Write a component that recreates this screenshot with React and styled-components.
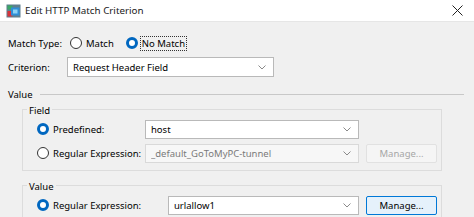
import React from "react";
import styled, { createGlobalStyle } from "styled-components";

const Global = createGlobalStyle`
  html, body {
    margin: 0;
    padding: 0;
    background: #f0f0f0;
  }
  body {
    font-family: "Noto Sans", "Open Sans", sans-serif;
    font-size: 9.5px;
    color: #000;
  }
`;

const Window = styled.div`
  width: 474px;
  height: 217px;
  overflow: hidden;
  background: #f0f0f0;
`;

const TitleBar = styled.div`
  height: 22px;
  background: #fff;
  display: flex;
  align-items: center;
  padding: 0 11px 0 6px;
  border-bottom: 1px solid #e6e6e6;
  box-sizing: border-box;
`;

const Title = styled.span`
  flex: 1;
  margin-left: 4px;
  font-size: 9.8px;
  color: #1a1a1a;
`;

const Body = styled.div`
  padding: 11px 10px 0 8px;
  display: flex;
  flex-direction: column;
  align-items: flex-start;
`;

const Row = styled.div`
  display: flex;
  align-items: center;
  height: 20px;
  flex-shrink: 0;
  margin-bottom: ${(p) => p.$mb || 0}px;
`;

const Label = styled.span`
  width: ${(p) => (p.$w ? p.$w + "px" : "auto")};
  margin-right: ${(p) => p.$mr || 0}px;
  flex-shrink: 0;
  white-space: nowrap;
`;

const RadioWrap = styled.label`
  display: inline-flex;
  align-items: center;
  margin-right: ${(p) => p.$mr || 0}px;
  width: ${(p) => (p.$w ? p.$w + "px" : "auto")};
  flex-shrink: 0;
  white-space: nowrap;
`;

const Dot = styled.span`
  width: 12px;
  height: 12px;
  border-radius: 50%;
  box-sizing: border-box;
  margin-right: 3px;
  flex-shrink: 0;
  background: #fff;
  border: ${(p) => (p.$on ? "3.5px solid #0067c0" : "1px solid #333")};
`;

const RadioText = styled.span`
  padding: 0 1px;
  outline: ${(p) => (p.$focus ? "1px dotted #333" : "none")};
`;

const Select = styled.div`
  width: ${(p) => p.$w}px;
  height: ${(p) => p.$h || 19}px;
  box-sizing: border-box;
  border: 1px solid ${(p) => (p.$disabled ? "#d9d9d9" : "#b9b9b9")};
  background: ${(p) => (p.$disabled ? "#f7f7f7" : "#fff")};
  color: ${(p) => (p.$disabled ? "#7a7a7a" : "#000")};
  display: flex;
  align-items: center;
  padding: 0 7px 0 5px;
  flex-shrink: 0;
`;

const SelectText = styled.span`
  flex: 1;
  white-space: nowrap;
  overflow: hidden;
`;

const Button = styled.div`
  width: 71px;
  height: 19px;
  box-sizing: border-box;
  margin-left: 7px;
  display: flex;
  align-items: center;
  justify-content: center;
  border-radius: 2px;
  border: 1px solid ${(p) => (p.$focus ? "#0078d7" : "#e1e1e1")};
  background: ${(p) => (p.$focus ? "#e5f1fb" : "#f5f5f5")};
  color: ${(p) => (p.$disabled ? "#a6a6a6" : "#000")};
`;

const SectionHead = styled.div`
  display: flex;
  align-items: center;
  align-self: stretch;
  height: 16px;
  margin-top: 9px;
`;

const Line = styled.div`
  flex: 1;
  height: 1px;
  background: #c8c8c8;
  margin: 0 0 0 7px;
`;

const GroupBox = styled.div`
  box-sizing: border-box;
  width: 420px;
  margin: ${(p) => p.$mt}px 0 0 14px;
  padding: 0 0 ${(p) => p.$pb || 0}px 14px;
  border: 1px solid #dcdcdc;
  display: flex;
  flex-direction: column;
  flex-shrink: 0;
`;

const GroupTitle = styled.div`
  width: fit-content;
  margin: -6px 0 2px -10px;
  padding: 0 2px;
  line-height: 13px;
  background: #f0f0f0;
`;

const Chevron = () => (
  <svg width="8" height="5" viewBox="0 0 8 5">
    <path d="M0.5 0.5 L4 4 L7.5 0.5" fill="none" stroke="#8a8a8a" strokeWidth="1" />
  </svg>
);

const AppIcon = () => (
  <svg width="15" height="14" viewBox="0 0 15 14">
    <rect x="0.5" y="0.5" width="14" height="13" fill="#5f7f8f" />
    <rect x="1.5" y="1.5" width="5" height="4" fill="#3aa865" />
    <rect x="1.5" y="7" width="5" height="5.5" fill="#d8343a" />
    <rect x="5" y="3.5" width="8.5" height="8" fill="#2f8fd8" />
    <rect x="7" y="5.5" width="4.5" height="4" fill="#8fd3f5" />
  </svg>
);

const Close = () => (
  <svg width="11" height="11" viewBox="0 0 11 11">
    <path d="M0.5 0.5 L10.5 10.5 M10.5 0.5 L0.5 10.5" stroke="#222" strokeWidth="1" />
  </svg>
);

function Radio({ on, focus, children, mr, w }) {
  return (
    <RadioWrap $mr={mr} $w={w}>
      <Dot $on={on} />
      <RadioText $focus={focus}>{children}</RadioText>
    </RadioWrap>
  );
}

export default function App() {
  return (
    <Window>
      <Global />
      <TitleBar>
        <AppIcon />
        <Title>Edit HTTP Match Criterion</Title>
        <Close />
      </TitleBar>
      <Body>
        <Row $mb={4}>
          <Label $mr={8}>Match Type:</Label>
          <Radio mr={11}>Match</Radio>
          <Radio on focus>
            No Match
          </Radio>
        </Row>
        <Row>
          <Label $w={59}>Criterion:</Label>
          <Select $w={207} $h={20}>
            <SelectText>Request Header Field</SelectText>
            <Chevron />
          </Select>
        </Row>
        <SectionHead>
          <Label>Value</Label>
          <Line />
        </SectionHead>
        <GroupBox $mt={7} $pb={7}>
          <GroupTitle>Field</GroupTitle>
          <Row $mb={4}>
            <Radio on w={108}>
              Predefined:
            </Radio>
            <Select $w={214}>
              <SelectText>host</SelectText>
              <Chevron />
            </Select>
          </Row>
          <Row>
            <Radio w={108}>Regular Expression:</Radio>
            <Select $w={214} $disabled>
              <SelectText>_default_GoToMyPC-tunnel</SelectText>
              <Chevron />
            </Select>
            <Button $disabled>Manage...</Button>
          </Row>
        </GroupBox>
        <GroupBox $mt={14} $pb={8}>
          <GroupTitle>Value</GroupTitle>
          <Row>
            <Radio on w={131}>
              Regular Expression:
            </Radio>
            <Select $w={191}>
              <SelectText>urlallow1</SelectText>
              <Chevron />
            </Select>
            <Button $focus>Manage...</Button>
          </Row>
        </GroupBox>
      </Body>
    </Window>
  );
}
